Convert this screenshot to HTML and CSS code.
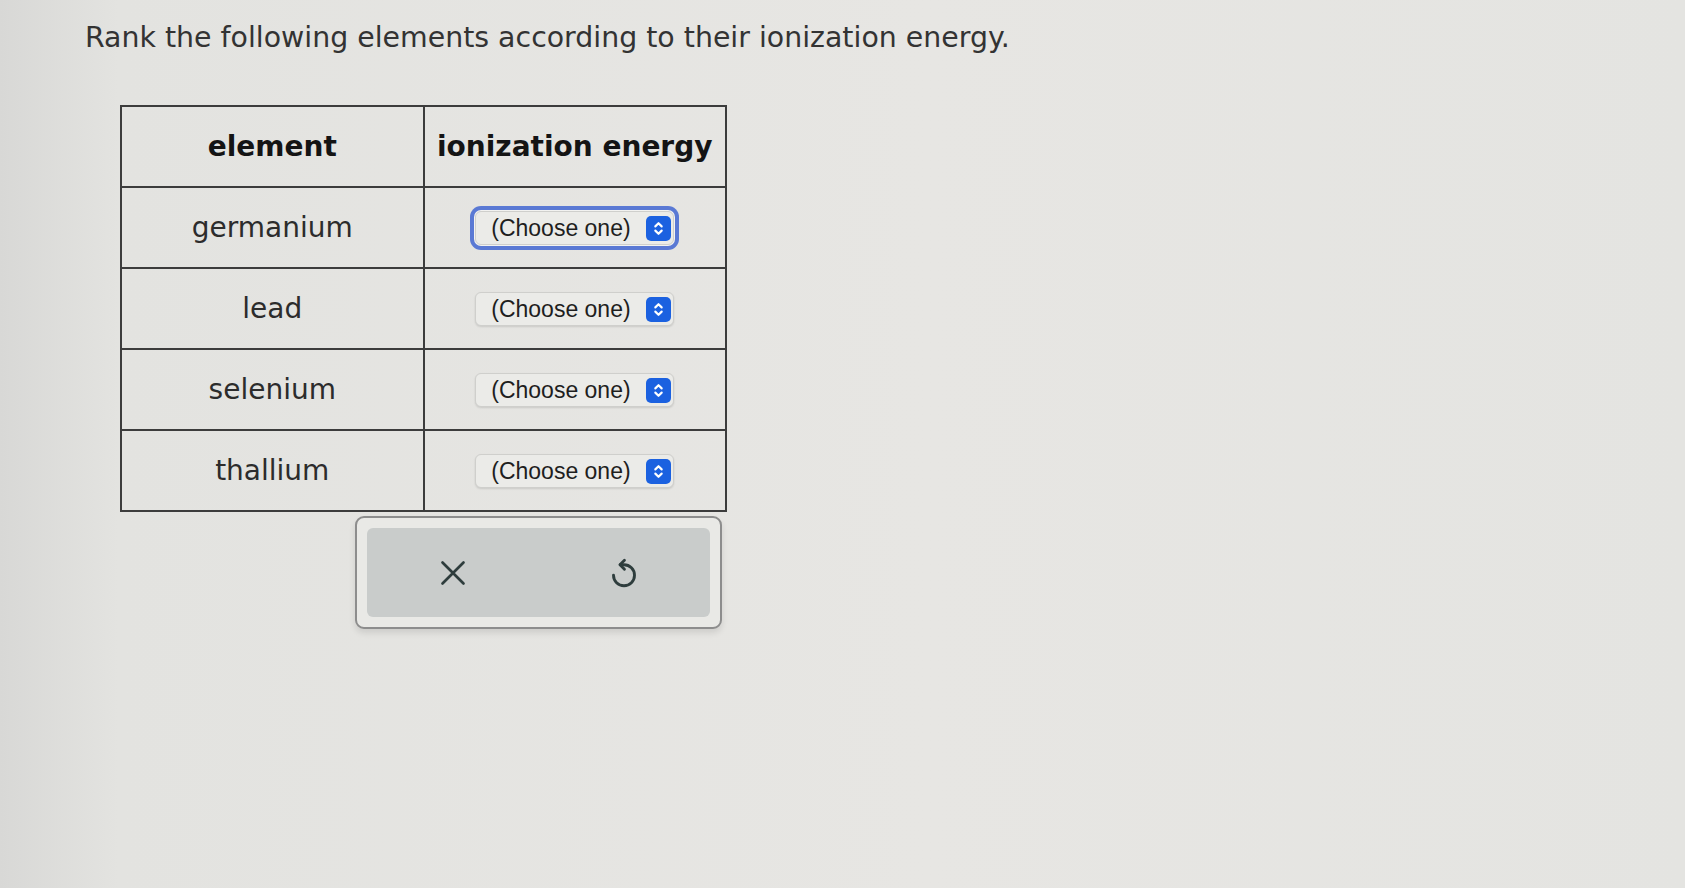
FILE: index.html
```html
<!DOCTYPE html>
<html lang="en">
<head>
  <meta charset="UTF-8">
  <meta name="viewport" content="width=device-width, initial-scale=1.0">
  <title>Ionization energy</title>
  <link rel="stylesheet" href="styles.css">
</head>
<body>
  <div class="page">
    <p class="prompt">Rank the following elements according to their ionization energy.</p>

    <table class="rank">
      <tr>
        <th>element</th>
        <th>ionization energy</th>
      </tr>
      <tr>
        <td>germanium</td>
        <td><span class="select focused">(Choose one) <span class="stepper"><svg viewBox="0 0 12 16" width="13" height="17"><path d="M3 6 L6 3 L9 6 M3 10 L6 13 L9 10" fill="none" stroke="#fff" stroke-width="2" stroke-linecap="round" stroke-linejoin="round"/></svg></span></span></td>
      </tr>
      <tr>
        <td>lead</td>
        <td><span class="select">(Choose one) <span class="stepper"><svg viewBox="0 0 12 16" width="13" height="17"><path d="M3 6 L6 3 L9 6 M3 10 L6 13 L9 10" fill="none" stroke="#fff" stroke-width="2" stroke-linecap="round" stroke-linejoin="round"/></svg></span></span></td>
      </tr>
      <tr>
        <td>selenium</td>
        <td><span class="select">(Choose one) <span class="stepper"><svg viewBox="0 0 12 16" width="13" height="17"><path d="M3 6 L6 3 L9 6 M3 10 L6 13 L9 10" fill="none" stroke="#fff" stroke-width="2" stroke-linecap="round" stroke-linejoin="round"/></svg></span></span></td>
      </tr>
      <tr>
        <td>thallium</td>
        <td><span class="select">(Choose one) <span class="stepper"><svg viewBox="0 0 12 16" width="13" height="17"><path d="M3 6 L6 3 L9 6 M3 10 L6 13 L9 10" fill="none" stroke="#fff" stroke-width="2" stroke-linecap="round" stroke-linejoin="round"/></svg></span></span></td>
      </tr>
    </table>

    <div class="controls">
      <div class="controls-inner">
        <button class="tool" title="Clear">
          <svg viewBox="0 0 24 24" width="28" height="28"><path d="M3 3 L21 21 M21 3 L3 21" fill="none" stroke="#2e3d3d" stroke-width="2.3" stroke-linecap="round"/></svg>
        </button>
        <button class="tool" title="Undo">
          <svg viewBox="0 0 24 24" width="36" height="36"><path d="M9.5 6.5 H12 A7 7 0 1 1 5 13.5" fill="none" stroke="#2e3d3d" stroke-width="1.9" stroke-linecap="round"/><path d="M12.3 3.5 L9.3 6.5 L12.3 9.5" fill="none" stroke="#2e3d3d" stroke-width="1.9" stroke-linecap="round" stroke-linejoin="round"/></svg>
        </button>
      </div>
    </div>
  </div>
</body>
</html>
```

FILE: styles.css
```css
html, body { height: 100%; }
body { margin: 0; font-family: "DejaVu Sans", Verdana, sans-serif; color: #2b2b2b; background: linear-gradient(90deg, #d8d8d6 0, #e3e3e0 7%, #e7e6e3 55%, #e4e4e1 100%); }
.page { padding: 21px 0 0 85px; }
.prompt { margin: 0; font-size: 28.4px; color: #333; }

.rank { margin: 51px 0 0 35px; border-collapse: collapse; width: 607px; table-layout: fixed; }
.rank th, .rank td { border: 2px solid #3c3c3c; height: 79px; padding: 0; text-align: center; vertical-align: middle; font-size: 28px; }
.rank th { font-weight: bold; color: #141414; }
.rank td { color: #2c2c2c; }

.select { display: inline-flex; align-items: center; justify-content: space-between; box-sizing: border-box; width: 199px; height: 34px; padding: 0 2px 0 15px; border: 1px solid #cfcfcc; border-radius: 6px; background: #ebebe8; box-shadow: 0 1px 2px rgba(0,0,0,.12); font-family: "Liberation Sans", Arial, sans-serif; font-size: 23px; color: #1e1e1e; }
.select.focused { box-shadow: 0 0 0 1px #f2f2f0, 0 0 0 5px #5a79d4; }
.stepper { display: flex; align-items: center; justify-content: center; width: 25px; height: 25px; border-radius: 5px; background: #1b61e0; }

.controls { box-sizing: border-box; width: 367px; height: 113px; margin: 4px 0 0 270px; padding: 10px; border: 2px solid #8d8d8d; border-radius: 9px; background: #e9e9e6; box-shadow: 0 4px 6px rgba(0,0,0,.1); }
.controls-inner { display: flex; height: 100%; border-radius: 6px; background: #c9cccb; }
.tool { flex: 1; display: flex; align-items: center; justify-content: center; border: none; background: none; padding: 0; cursor: pointer; }
```
